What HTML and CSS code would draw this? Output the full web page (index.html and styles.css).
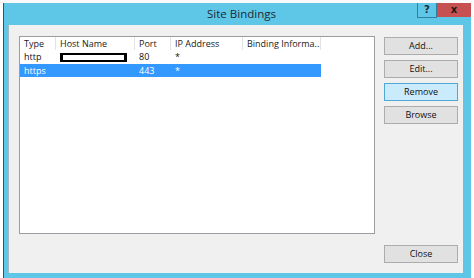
FILE: index.html
```html
<!DOCTYPE html>
<html>
<head>
<meta charset="utf-8">
<link rel="stylesheet" href="styles.css">
</head>
<body>
<div class="strip"></div>
<div class="window">
  <div class="titlebar">
    <div class="title">Site Bindings</div>
    <div class="tbtns">
      <div class="tb help">?</div>
      <div class="tb close">x</div>
    </div>
  </div>
  <div class="client">
    <div class="main">
      <div class="list">
        <div class="row head">
          <div class="c c1">Type</div>
          <div class="c c2">Host Name</div>
          <div class="c c3">Port</div>
          <div class="c c4">IP Address</div>
          <div class="c c5">Binding Informa...</div>
          <div class="c c6"></div>
        </div>
        <div class="row">
          <div class="c c1">http</div>
          <div class="c c2"><span class="redact"></span></div>
          <div class="c c3">80</div>
          <div class="c c4">*</div>
          <div class="c c5"></div>
        </div>
        <div class="row sel">
          <div class="c c1">https</div>
          <div class="c c2"></div>
          <div class="c c3">443</div>
          <div class="c c4">*</div>
          <div class="c c5"></div>
        </div>
      </div>
      <div class="buttons">
        <div class="btn">Add...</div>
        <div class="btn">Edit...</div>
        <div class="btn hot">Remove</div>
        <div class="btn">Browse</div>
      </div>
    </div>
    <div class="footer">
      <div class="btn">Close</div>
    </div>
  </div>
</div>
</body>
</html>
```
FILE: styles.css
```css
html, body {
  margin: 0;
  padding: 0;
  width: 474px;
  height: 278px;
  overflow: hidden;
  background: #ffffff;
  font-family: "Open Sans", "Noto Sans", sans-serif;
}
.strip {
  height: 3px;
  background: #fafafa;
}
.window {
  margin-left: 3px;
  width: 467px;
  height: 280px;
  background: #5ec7e7;
  border-left: 1px solid #4b4f52;
  display: flex;
  flex-direction: column;
}
.titlebar {
  height: 22px;
  display: flex;
  position: relative;
}
.title {
  flex: 1;
  text-align: center;
  font-size: 11.5px;
  line-height: 22px;
  color: #1b2a33;
  padding-left: 8px;
}
.tbtns {
  position: absolute;
  right: 0;
  top: 0;
  display: flex;
}
.tb {
  height: 14px;
  font-size: 10px;
  font-weight: bold;
  line-height: 14px;
  text-align: center;
  font-family: "DejaVu Sans", sans-serif;
}
.help {
  width: 18px;
  background: #5ec7e7;
  border: 1px solid #2f7fa0;
  border-top: none;
  color: #1d2a3a;
}
.close {
  width: 34px;
  background: #c75050;
  color: #1a1a1a;
  font-size: 10px;
  line-height: 13px;
}
.client {
  margin-left: 4px;
  width: 455px;
  height: 248px;
  background: #f0f0f0;
  border-left: 1px solid #9fb9c4;
  display: flex;
  flex-direction: column;
  box-sizing: border-box;
}
.main {
  display: flex;
  padding: 11px 5px 0 10px;
  gap: 9px;
}
.list {
  width: 357px;
  height: 198px;
  box-sizing: border-box;
  background: #fff;
  border: 1px solid #9a9da2;
  font-size: 9px;
  color: #111;
}
.row {
  display: flex;
  height: 13.5px;
  line-height: 13.5px;
}
.row.head {
  height: 13px;
  line-height: 13px;
  color: #1a1a1a;
}
.c {
  box-sizing: border-box;
  padding-left: 4px;
  white-space: nowrap;
  overflow: hidden;
}
.head .c {
  border-right: 1px solid #e3e3e3;
}
.head .c6 { border-right: none; flex: 1; }
.c1 { width: 36px; }
.c2 { width: 79px; }
.c3 { width: 36px; }
.c4 { width: 72px; }
.c5 { width: 78px; }
.sel .c { background: #3399ff; color: #fff; }
.redact {
  display: inline-block;
  width: 61px;
  height: 5px;
  border: 2px solid #000;
  border-width: 2px 3px;
  background: #fff;
  vertical-align: middle;
  margin-top: -1px;
}
.buttons {
  display: flex;
  flex-direction: column;
  gap: 5px;
  padding-top: 1px;
}
.btn {
  width: 74px;
  height: 18px;
  box-sizing: border-box;
  background: #e1e1e1;
  border: 1px solid #acacac;
  font-size: 9px;
  line-height: 16px;
  text-align: center;
  color: #111;
}
.btn.hot {
  background: #c9ebfb;
  border-color: #4fa7d6;
}
.footer {
  flex: 1;
  display: flex;
  justify-content: flex-end;
  align-items: flex-end;
  padding: 0 5px 10px 0;
}
```
